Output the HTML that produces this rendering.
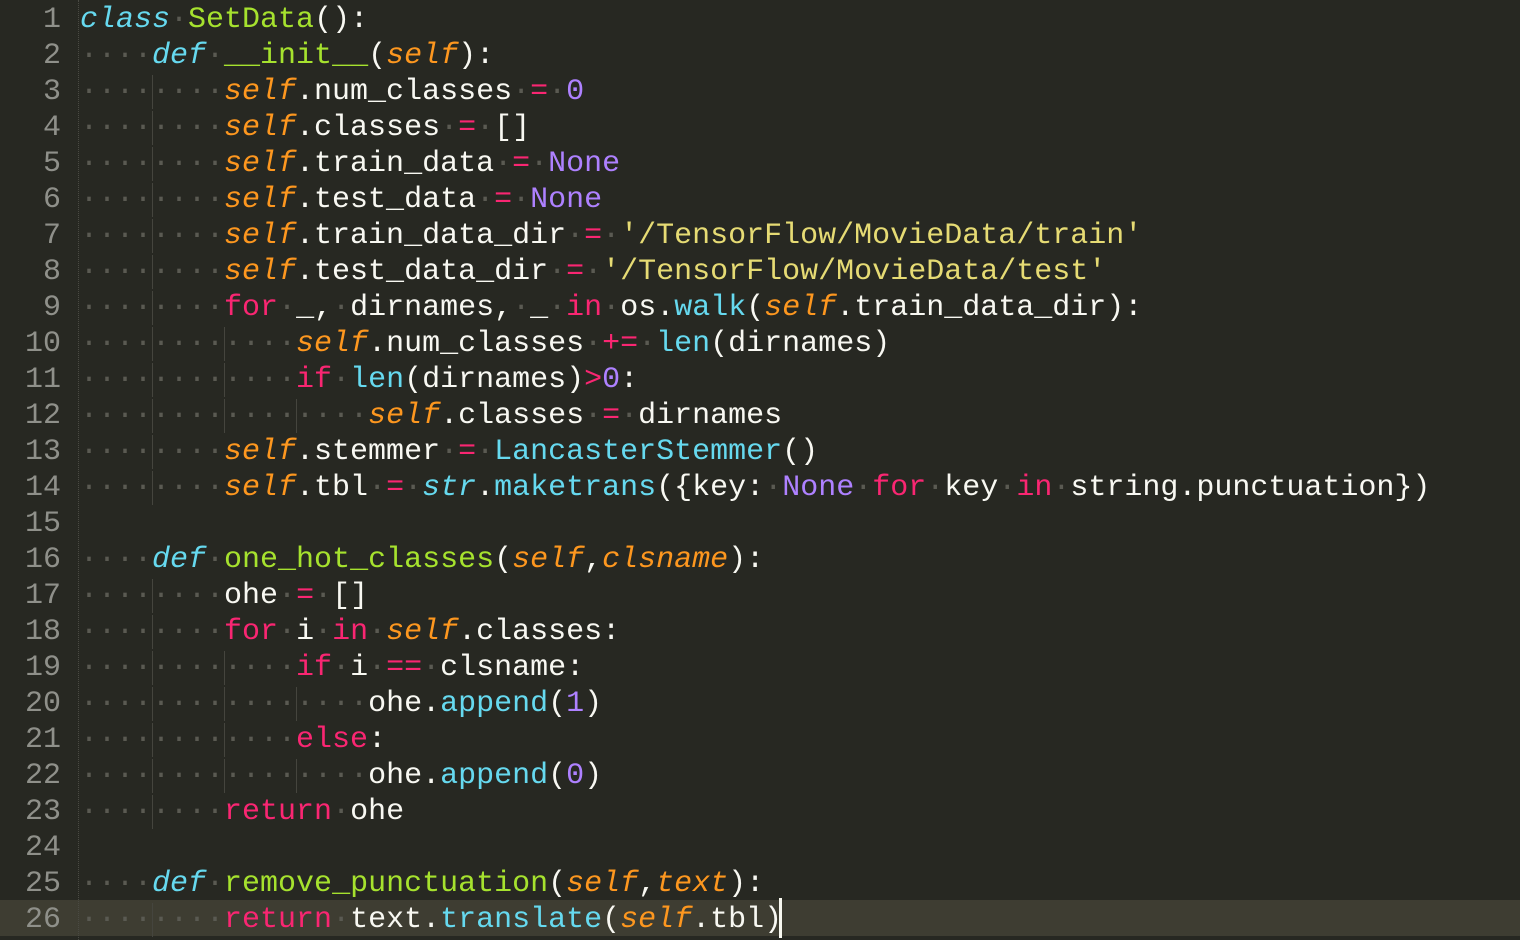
<!DOCTYPE html>
<html><head><meta charset="utf-8"><style>
html,body{margin:0;padding:0;background:#272822;width:1520px;height:940px;overflow:hidden}
#w{position:relative;width:1520px;height:940px;font-family:"Liberation Mono","DejaVu Sans Mono",monospace;font-size:30px;color:#f8f8f2}
.l{position:absolute;left:0;width:1520px;height:36px;line-height:36px;white-space:pre}
.n{position:absolute;left:0;top:2px;width:61px;text-align:right;color:#8f908a}
.c{position:absolute;left:80px;top:2px}
.cur{background:#3e3d32}
.d{color:#5a5a52}
.k{color:#f92672}.s{color:#66d9ef;font-style:italic}.f{color:#a6e22e}.o{color:#fd971f;font-style:italic}
.p{color:#ae81ff}.y{color:#e6db74}.b{color:#66d9ef}
.g{box-shadow:inset 1px 0 0 #45453e}
#gut{position:absolute;left:78px;top:0;height:940px;border-left:1px dotted #4a4a43}
#caret{position:absolute;left:779px;top:898px;width:3px;height:40px;background:#f8f8f0}
</style></head><body><div id="w">
<div class="l cur" style="top:900px"></div>
<div id="gut"></div>
<div class="l" style="top:0"><span class="n">1</span><span class="c"><span class="s">class</span><span class="d">·</span><span class="f">SetData</span>():</span></div>
<div class="l" style="top:36px"><span class="n">2</span><span class="c"><span class="d">····</span><span class="s">def</span><span class="d">·</span><span class="f">__init__</span>(<span class="o">self</span>):</span></div>
<div class="l" style="top:72px"><span class="n">3</span><span class="c"><span class="d">····</span><span class="d g">····</span><span class="o">self</span>.num_classes<span class="d">·</span><span class="k">=</span><span class="d">·</span><span class="p">0</span></span></div>
<div class="l" style="top:108px"><span class="n">4</span><span class="c"><span class="d">····</span><span class="d g">····</span><span class="o">self</span>.classes<span class="d">·</span><span class="k">=</span><span class="d">·</span>[]</span></div>
<div class="l" style="top:144px"><span class="n">5</span><span class="c"><span class="d">····</span><span class="d g">····</span><span class="o">self</span>.train_data<span class="d">·</span><span class="k">=</span><span class="d">·</span><span class="p">None</span></span></div>
<div class="l" style="top:180px"><span class="n">6</span><span class="c"><span class="d">····</span><span class="d g">····</span><span class="o">self</span>.test_data<span class="d">·</span><span class="k">=</span><span class="d">·</span><span class="p">None</span></span></div>
<div class="l" style="top:216px"><span class="n">7</span><span class="c"><span class="d">····</span><span class="d g">····</span><span class="o">self</span>.train_data_dir<span class="d">·</span><span class="k">=</span><span class="d">·</span><span class="y">'/TensorFlow/MovieData/train'</span></span></div>
<div class="l" style="top:252px"><span class="n">8</span><span class="c"><span class="d">····</span><span class="d g">····</span><span class="o">self</span>.test_data_dir<span class="d">·</span><span class="k">=</span><span class="d">·</span><span class="y">'/TensorFlow/MovieData/test'</span></span></div>
<div class="l" style="top:288px"><span class="n">9</span><span class="c"><span class="d">····</span><span class="d g">····</span><span class="k">for</span><span class="d">·</span>_,<span class="d">·</span>dirnames,<span class="d">·</span>_<span class="d">·</span><span class="k">in</span><span class="d">·</span>os.<span class="b">walk</span>(<span class="o">self</span>.train_data_dir):</span></div>
<div class="l" style="top:324px"><span class="n">10</span><span class="c"><span class="d">····</span><span class="d g">····</span><span class="d g">····</span><span class="o">self</span>.num_classes<span class="d">·</span><span class="k">+=</span><span class="d">·</span><span class="b">len</span>(dirnames)</span></div>
<div class="l" style="top:360px"><span class="n">11</span><span class="c"><span class="d">····</span><span class="d g">····</span><span class="d g">····</span><span class="k">if</span><span class="d">·</span><span class="b">len</span>(dirnames)<span class="k">&gt;</span><span class="p">0</span>:</span></div>
<div class="l" style="top:396px"><span class="n">12</span><span class="c"><span class="d">····</span><span class="d g">····</span><span class="d g">····</span><span class="d g">····</span><span class="o">self</span>.classes<span class="d">·</span><span class="k">=</span><span class="d">·</span>dirnames</span></div>
<div class="l" style="top:432px"><span class="n">13</span><span class="c"><span class="d">····</span><span class="d g">····</span><span class="o">self</span>.stemmer<span class="d">·</span><span class="k">=</span><span class="d">·</span><span class="b">LancasterStemmer</span>()</span></div>
<div class="l" style="top:468px"><span class="n">14</span><span class="c"><span class="d">····</span><span class="d g">····</span><span class="o">self</span>.tbl<span class="d">·</span><span class="k">=</span><span class="d">·</span><span class="s">str</span>.<span class="b">maketrans</span>({key:<span class="d">·</span><span class="p">None</span><span class="d">·</span><span class="k">for</span><span class="d">·</span>key<span class="d">·</span><span class="k">in</span><span class="d">·</span>string.punctuation})</span></div>
<div class="l" style="top:504px"><span class="n">15</span></div>
<div class="l" style="top:540px"><span class="n">16</span><span class="c"><span class="d">····</span><span class="s">def</span><span class="d">·</span><span class="f">one_hot_classes</span>(<span class="o">self</span>,<span class="o">clsname</span>):</span></div>
<div class="l" style="top:576px"><span class="n">17</span><span class="c"><span class="d">····</span><span class="d g">····</span>ohe<span class="d">·</span><span class="k">=</span><span class="d">·</span>[]</span></div>
<div class="l" style="top:612px"><span class="n">18</span><span class="c"><span class="d">····</span><span class="d g">····</span><span class="k">for</span><span class="d">·</span>i<span class="d">·</span><span class="k">in</span><span class="d">·</span><span class="o">self</span>.classes:</span></div>
<div class="l" style="top:648px"><span class="n">19</span><span class="c"><span class="d">····</span><span class="d g">····</span><span class="d g">····</span><span class="k">if</span><span class="d">·</span>i<span class="d">·</span><span class="k">==</span><span class="d">·</span>clsname:</span></div>
<div class="l" style="top:684px"><span class="n">20</span><span class="c"><span class="d">····</span><span class="d g">····</span><span class="d g">····</span><span class="d g">····</span>ohe.<span class="b">append</span>(<span class="p">1</span>)</span></div>
<div class="l" style="top:720px"><span class="n">21</span><span class="c"><span class="d">····</span><span class="d g">····</span><span class="d g">····</span><span class="k">else</span>:</span></div>
<div class="l" style="top:756px"><span class="n">22</span><span class="c"><span class="d">····</span><span class="d g">····</span><span class="d g">····</span><span class="d g">····</span>ohe.<span class="b">append</span>(<span class="p">0</span>)</span></div>
<div class="l" style="top:792px"><span class="n">23</span><span class="c"><span class="d">····</span><span class="d g">····</span><span class="k">return</span><span class="d">·</span>ohe</span></div>
<div class="l" style="top:828px"><span class="n">24</span></div>
<div class="l" style="top:864px"><span class="n">25</span><span class="c"><span class="d">····</span><span class="s">def</span><span class="d">·</span><span class="f">remove_punctuation</span>(<span class="o">self</span>,<span class="o">text</span>):</span></div>
<div class="l" style="top:900px"><span class="n">26</span><span class="c"><span class="d">····</span><span class="d g">····</span><span class="k">return</span><span class="d">·</span>text.<span class="b">translate</span>(<span class="o">self</span>.tbl)</span></div>
<div id="caret"></div>
</div></body></html>
